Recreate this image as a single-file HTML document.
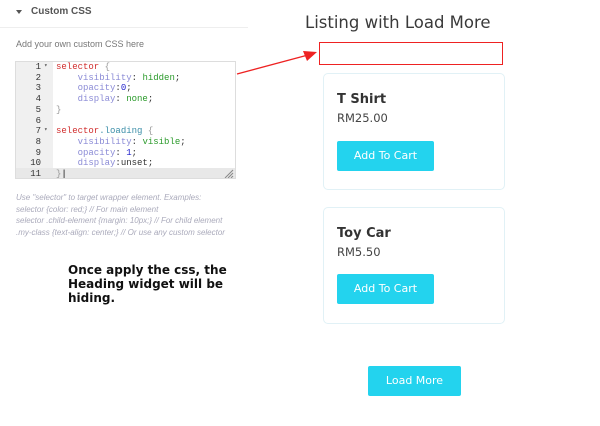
<!DOCTYPE html>
<html><head><style>
*{margin:0;padding:0;box-sizing:border-box}
body{width:600px;height:426px;background:#fff;position:relative;overflow:hidden;font-family:"Liberation Sans",sans-serif}
.a{position:absolute;white-space:nowrap}
.code{position:absolute;left:15px;top:61px;width:221px;height:118px;border:1px solid #ddd;background:#fff;font-family:"Liberation Mono",monospace;font-size:9px;overflow:hidden}
.gut{position:absolute;left:0;top:0;width:37px;height:100%;background:#f0f0f0}
.ln{position:absolute;left:0;width:25px;text-align:right;color:#333}
.cl{position:absolute;left:40px;color:#333;white-space:pre}
.r{color:#d12e2e}.p{color:#8b8bd6}.g{color:#2a9a2a}.b{color:#2222cc}.t{color:#3b8ea8}
.card{position:absolute;left:323px;width:182px;height:117px;border:1.5px solid #e1f1f6;border-radius:5px}
.btn{position:absolute;background:#23d3ee;color:#fff;font-family:"DejaVu Sans",sans-serif;font-size:11px;text-align:center;border-radius:2px}
.h{font-family:"DejaVu Sans",sans-serif;color:#333}
</style></head><body>
<div class="a" style="left:16px;top:10px;width:0;height:0;border-left:3.5px solid transparent;border-right:3.5px solid transparent;border-top:4px solid #555"></div>
<div class="a" style="left:31px;top:6px;font-size:10px;font-weight:bold;color:#555">Custom CSS</div>
<div class="a" style="left:0;top:27px;width:248px;height:1px;background:#eee"></div>
<div class="a" style="left:16px;top:39px;font-size:9px;color:#777">Add your own custom CSS here</div>
<div class="code"><div class="gut"></div>
<div class="a" style="left:0;top:106px;width:219px;height:11px;background:#e8e8e8"></div>
<div class="ln" style="top:0">1</div><div class="ln" style="top:10.7px">2</div><div class="ln" style="top:21.4px">3</div><div class="ln" style="top:32.1px">4</div><div class="ln" style="top:42.8px">5</div><div class="ln" style="top:53.5px">6</div><div class="ln" style="top:64.2px">7</div><div class="ln" style="top:74.9px">8</div><div class="ln" style="top:85.6px">9</div><div class="ln" style="top:96.3px">10</div><div class="ln" style="top:107px">11</div>
<div class="a" style="left:28px;top:0;font-size:6px;color:#555">▾</div><div class="a" style="left:28px;top:64px;font-size:6px;color:#555">▾</div>
<div class="cl" style="top:0"><span class="r">selector</span> <span style="color:#999">{</span></div>
<div class="cl" style="top:10.7px">    <span class="p">visibility</span>: <span class="g">hidden</span>;</div>
<div class="cl" style="top:21.4px">    <span class="p">opacity</span>:<span class="b">0</span>;</div>
<div class="cl" style="top:32.1px">    <span class="p">display</span>: <span class="g">none</span>;</div>
<div class="cl" style="top:42.8px;color:#999">}</div>
<div class="cl" style="top:64.2px"><span class="r">selector</span><span class="t">.loading</span> <span style="color:#999">{</span></div>
<div class="cl" style="top:74.9px">    <span class="p">visibility</span>: <span class="g">visible</span>;</div>
<div class="cl" style="top:85.6px">    <span class="p">opacity</span>: <span class="b">1</span>;</div>
<div class="cl" style="top:96.3px">    <span class="p">display</span>:unset;</div>
<div class="cl" style="top:107px;color:#999">}<span style="color:#000">|</span></div>
<svg class="a" style="left:207px;top:106px" width="12" height="11"><path d="M2 10L10 2M5 10L10 5M8 10L10 8" stroke="#888" stroke-width="1"/></svg>
</div>
<div class="a" style="left:16px;top:192px;font-size:8px;line-height:11.7px;font-style:italic;color:#aab">Use "selector" to target wrapper element. Examples:<br>selector {color: red;} // For main element<br>selector .child-element {margin: 10px;} // For child element<br>.my-class {text-align: center;} // Or use any custom selector</div>
<div class="a h" style="left:68px;top:263px;font-size:12px;font-weight:bold;line-height:14px;color:#111">Once apply the css, the<br>Heading widget will be<br>hiding.</div>
<svg class="a" style="left:0;top:0" width="600" height="426"><line x1="237" y1="74" x2="308" y2="55" stroke="#e22" stroke-width="1.3"/><polygon points="317,52 303,51 307,61" fill="#e22"/></svg>
<div class="a h" style="left:305px;top:13px;font-size:16.5px;color:#3a3a3a">Listing with Load More</div>
<div class="a" style="left:319px;top:42px;width:184px;height:23px;border:1.5px solid #e22"></div>
<div class="card" style="top:73px"></div>
<div class="a h" style="left:337px;top:92px;font-size:13px;font-weight:bold">T Shirt</div>
<div class="a h" style="left:337px;top:111px;font-size:11.5px;color:#444">RM25.00</div>
<div class="btn" style="left:337px;top:141px;width:97px;height:30px;line-height:30px">Add To Cart</div>
<div class="card" style="top:207px"></div>
<div class="a h" style="left:337px;top:226px;font-size:13px;font-weight:bold">Toy Car</div>
<div class="a h" style="left:337px;top:245px;font-size:11.5px;color:#444">RM5.50</div>
<div class="btn" style="left:337px;top:274px;width:97px;height:30px;line-height:30px">Add To Cart</div>
<div class="btn" style="left:368px;top:366px;width:93px;height:30px;line-height:30px">Load More</div>
</body></html>
